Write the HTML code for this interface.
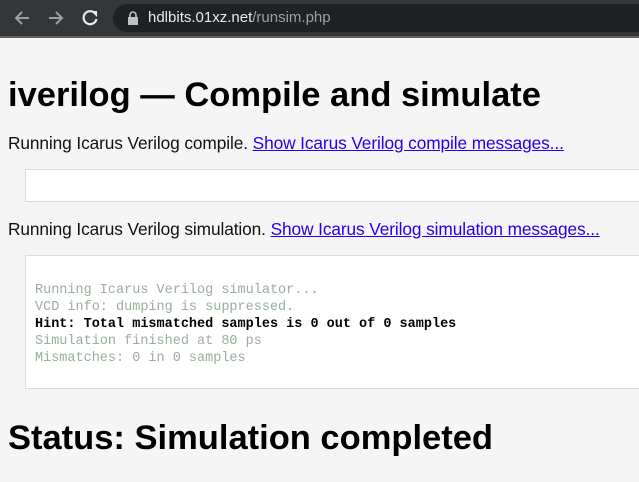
<!DOCTYPE html>
<html><head><meta charset="utf-8"><style>
html,body{margin:0;padding:0;width:639px;height:482px;overflow:hidden;background:#f5f5f5;font-family:"Liberation Sans",sans-serif;}
.bar{position:absolute;left:0;top:0;width:639px;height:36px;background:#35363a;}
.line{position:absolute;left:0;top:36px;width:639px;height:2px;background:#5f6368;}
.pill{position:absolute;left:113px;top:4px;width:540px;height:28px;border-radius:14px;background:#202124;}
.url{position:absolute;left:148px;top:9px;font-size:15px;color:#e8eaed;}
.url span{color:#9aa0a6;}
.ic{position:absolute;top:8px;}
h1{position:absolute;left:8px;top:76px;margin:0;font-size:34.5px;font-weight:bold;color:#000;white-space:nowrap;}
.p{position:absolute;left:8px;font-size:17.3px;color:#111;white-space:nowrap;letter-spacing:-0.1px;}
.p a{color:#2200ee;text-decoration:underline;}
.box{position:absolute;left:25px;width:630px;background:#fff;border:1px solid #c9dff0;}
pre{position:absolute;left:35px;top:282px;margin:0;font-family:"Liberation Mono",monospace;font-size:13.5px;line-height:17px;color:#9aae9a;}
pre b{color:#000;}
h2{position:absolute;left:8px;top:419px;margin:0;font-size:34.5px;font-weight:bold;white-space:nowrap;}
</style></head><body>
<div class="bar"></div><div class="line"></div><div class="pill"></div>
<svg class="ic" style="left:12px" width="20" height="20" viewBox="0 0 20 20"><path d="M17 10H4M10 4L4 10l6 6" stroke="#9aa0a6" stroke-width="2" fill="none"/></svg>
<svg class="ic" style="left:46px" width="20" height="20" viewBox="0 0 20 20"><path d="M3 10h13M10 4l6 6-6 6" stroke="#9aa0a6" stroke-width="2" fill="none"/></svg>
<svg class="ic" style="left:80px" width="20" height="20" viewBox="0 0 20 20"><path d="M15.5 6A6.5 6.5 0 1 0 16.5 11" stroke="#e8eaed" stroke-width="2.2" fill="none"/><path d="M11 3h6v6z" fill="#e8eaed"/></svg>
<svg class="ic" style="left:127px;top:11px" width="12" height="14" viewBox="0 0 12 14"><rect x="1" y="6" width="10" height="8" fill="#bdc1c6"/><path d="M3 6V4a3 3 0 0 1 6 0v2" stroke="#bdc1c6" stroke-width="1.6" fill="none"/></svg>
<div class="url">hdlbits.01xz.net<span>/runsim.php</span></div>
<h1>iverilog — Compile and simulate</h1>
<div class="p" style="top:133px">Running Icarus Verilog compile. <a>Show Icarus Verilog compile messages...</a></div>
<div class="box" style="top:169px;height:31px"></div>
<div class="p" style="top:219px">Running Icarus Verilog simulation. <a>Show Icarus Verilog simulation messages...</a></div>
<div class="box" style="top:255px;height:132px"></div>
<pre>Running Icarus Verilog simulator...
VCD info: dumping is suppressed.
<b>Hint: Total mismatched samples is 0 out of 0 samples</b>
Simulation finished at 80 ps
Mismatches: 0 in 0 samples</pre>
<h2>Status: Simulation completed</h2>
</body></html>
